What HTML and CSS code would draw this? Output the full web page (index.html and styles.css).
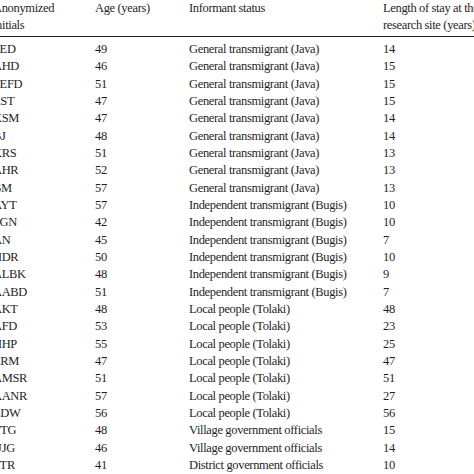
FILE: index.html
```html
<!DOCTYPE html>
<html>
<head>
<meta charset="utf-8">
<link rel="stylesheet" href="styles.css">
</head>
<body>
<div class="frame">
<table class="data">
<thead>
<tr>
<th class="c1">Anonymized<br>initials</th>
<th class="c2">Age (years)</th>
<th class="c3">Informant status</th>
<th class="c4">Length of stay at the<br>research site (years)</th>
</tr>
</thead>
<tbody>
<tr class="first"><td>SED</td><td>49</td><td>General transmigrant (Java)</td><td>14</td></tr>
<tr><td>AHD</td><td>46</td><td>General transmigrant (Java)</td><td>15</td></tr>
<tr><td>SEFD</td><td>51</td><td>General transmigrant (Java)</td><td>15</td></tr>
<tr><td>EST</td><td>47</td><td>General transmigrant (Java)</td><td>15</td></tr>
<tr><td>KSM</td><td>47</td><td>General transmigrant (Java)</td><td>14</td></tr>
<tr><td>BJ</td><td>48</td><td>General transmigrant (Java)</td><td>14</td></tr>
<tr><td>KRS</td><td>51</td><td>General transmigrant (Java)</td><td>13</td></tr>
<tr><td>AHR</td><td>52</td><td>General transmigrant (Java)</td><td>13</td></tr>
<tr><td>BM</td><td>57</td><td>General transmigrant (Java)</td><td>13</td></tr>
<tr><td>AYT</td><td>57</td><td>Independent transmigrant (Bugis)</td><td>10</td></tr>
<tr><td>SGN</td><td>42</td><td>Independent transmigrant (Bugis)</td><td>10</td></tr>
<tr><td>AN</td><td>45</td><td>Independent transmigrant (Bugis)</td><td>7</td></tr>
<tr><td>HDR</td><td>50</td><td>Independent transmigrant (Bugis)</td><td>10</td></tr>
<tr><td>ALBK</td><td>48</td><td>Independent transmigrant (Bugis)</td><td>9</td></tr>
<tr><td>AABD</td><td>51</td><td>Independent transmigrant (Bugis)</td><td>7</td></tr>
<tr><td>AKT</td><td>48</td><td>Local people (Tolaki)</td><td>48</td></tr>
<tr><td>AFD</td><td>53</td><td>Local people (Tolaki)</td><td>23</td></tr>
<tr><td>HHP</td><td>55</td><td>Local people (Tolaki)</td><td>25</td></tr>
<tr><td>ERM</td><td>47</td><td>Local people (Tolaki)</td><td>47</td></tr>
<tr><td>AMSR</td><td>51</td><td>Local people (Tolaki)</td><td>51</td></tr>
<tr><td>AANR</td><td>57</td><td>Local people (Tolaki)</td><td>27</td></tr>
<tr><td>EDW</td><td>56</td><td>Local people (Tolaki)</td><td>56</td></tr>
<tr><td>TTG</td><td>48</td><td>Village government officials</td><td>15</td></tr>
<tr><td>UJG</td><td>46</td><td>Village government officials</td><td>14</td></tr>
<tr><td>FTR</td><td>41</td><td>District government officials</td><td>10</td></tr>
</tbody>
</table>
</div>
</body>
</html>
```
FILE: styles.css
```css
html, body {
  margin: 0;
  padding: 0;
  background: #ffffff;
}
.frame {
  width: 474px;
  height: 474px;
  overflow: hidden;
}
.data {
  margin-left: -7px;
  border-collapse: collapse;
  font-family: "Liberation Serif", "Times New Roman", serif;
  font-size: 12.5px;
  letter-spacing: -0.35px;
  line-height: 17.33px;
  color: #1f1f1f;
  table-layout: fixed;
  width: 560px;
}
.data th {
  font-weight: normal;
  text-align: left;
  vertical-align: top;
  padding: 0 0 2px 0;
  line-height: 17px;
  border-bottom: 1.6px solid #222222;
  white-space: nowrap;
}
.c1 { width: 102px; }
.c2 { width: 94px; }
.c3 { width: 194px; }
.c4 { width: 170px; }
.data td {
  padding: 0;
  white-space: nowrap;
  height: 17.33px;
}
.data tr.first td {
  padding-top: 4px;
}
```
